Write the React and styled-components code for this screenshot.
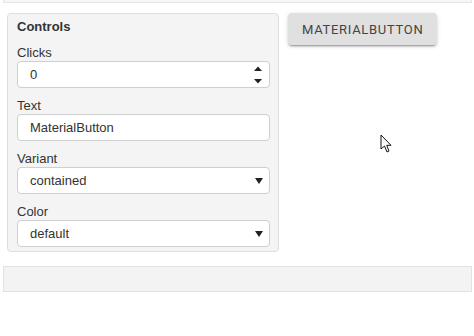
import React from 'react';
import styled, { createGlobalStyle } from 'styled-components';

const GlobalStyle = createGlobalStyle`
  html, body {
    margin: 0;
    padding: 0;
    background: #fff;
    font-family: "Liberation Sans", Arial, sans-serif;
    color: #333;
  }
`;

const Page = styled.div`
  position: relative;
  padding: 0 2px 0 3px;
  min-height: 336px;
  box-sizing: border-box;
`;

const TopBar = styled.div`
  height: 2px;
  background: #f7f7f7;
  border: 1px solid #e4e4e4;
  border-top: none;
`;

const Main = styled.div`
  display: flex;
  align-items: flex-start;
  gap: 9px;
  margin: 10px 0 0 4px;
`;

const Panel = styled.div`
  width: 272px;
  box-sizing: border-box;
  padding: 5px 8px 4px 9px;
  background: #f4f4f4;
  border: 1px solid #dedede;
  border-radius: 4px;
  display: flex;
  flex-direction: column;
  gap: 10px;
`;

const Title = styled.div`
  font-size: 13px;
  font-weight: bold;
  line-height: 16px;
  color: #333;
`;

const Field = styled.div`
  display: flex;
  flex-direction: column;
`;

const Label = styled.label`
  font-size: 13px;
  line-height: 16px;
  color: #333;
`;

const Box = styled.div`
  height: 27px;
  box-sizing: border-box;
  display: flex;
  align-items: center;
  padding: 0 6px 0 12px;
  background: #fff;
  border: 1px solid #cfcfcf;
  border-radius: 4px;
`;

const BoxInput = styled.input`
  flex: 1;
  min-width: 0;
  border: none;
  outline: none;
  padding: 0;
  background: transparent;
  font-family: "Liberation Sans", Arial, sans-serif;
  font-size: 13px;
  color: #333;
`;

const BoxText = styled.span`
  flex: 1;
  font-size: 13px;
  color: #333;
`;

const Spinner = styled.svg`
  width: 10px;
  height: 20px;
`;

const Caret = styled.svg`
  width: 8px;
  height: 6px;
`;

const MaterialButton = styled.button`
  height: 32px;
  padding: 0 14px;
  border: none;
  border-radius: 4px;
  background: #e0e0e0;
  color: #444;
  font-family: Roboto, "Liberation Sans", sans-serif;
  font-size: 13px;
  letter-spacing: 0.7px;
  text-transform: uppercase;
  box-shadow: 0 3px 1px -2px rgba(0, 0, 0, 0.2), 0 2px 2px 0 rgba(0, 0, 0, 0.14),
    0 1px 5px 0 rgba(0, 0, 0, 0.12);
  cursor: pointer;
`;

const BottomBar = styled.div`
  margin-top: 14px;
  height: 24px;
  background: #f3f3f3;
  border: 1px solid #e2e2e2;
`;

const Cursor = styled.svg`
  position: absolute;
  left: 380px;
  top: 134px;
  width: 13px;
  height: 20px;
`;

const SelectBox = ({ value }) => (
  <Box>
    <BoxText>{value}</BoxText>
    <Caret viewBox="0 0 8 6">
      <path d="M0 0 L8 0 L4 6 Z" fill="#222" />
    </Caret>
  </Box>
);

export default function App() {
  return (
    <>
      <GlobalStyle />
      <Page>
        <TopBar />
        <Main>
          <Panel>
            <Title>Controls</Title>
            <Field>
              <Label>Clicks</Label>
              <Box>
                <BoxInput defaultValue="0" />
                <Spinner viewBox="0 0 10 20">
                  <path d="M1 6 L5 1.5 L9 6 Z" fill="#222" />
                  <path d="M1 14 L9 14 L5 18.5 Z" fill="#222" />
                </Spinner>
              </Box>
            </Field>
            <Field>
              <Label>Text</Label>
              <Box>
                <BoxInput defaultValue="MaterialButton" />
              </Box>
            </Field>
            <Field>
              <Label>Variant</Label>
              <SelectBox value="contained" />
            </Field>
            <Field>
              <Label>Color</Label>
              <SelectBox value="default" />
            </Field>
          </Panel>
          <MaterialButton>MaterialButton</MaterialButton>
        </Main>
        <BottomBar />
        <Cursor viewBox="0 0 13 20">
          <path
            d="M1 1 L1 15 L4.5 12 L7 18 L9 17 L6.7 11.3 L11 11.3 Z"
            fill="#fff"
            stroke="#111"
            strokeWidth="1"
            strokeLinejoin="round"
          />
        </Cursor>
      </Page>
    </>
  );
}
